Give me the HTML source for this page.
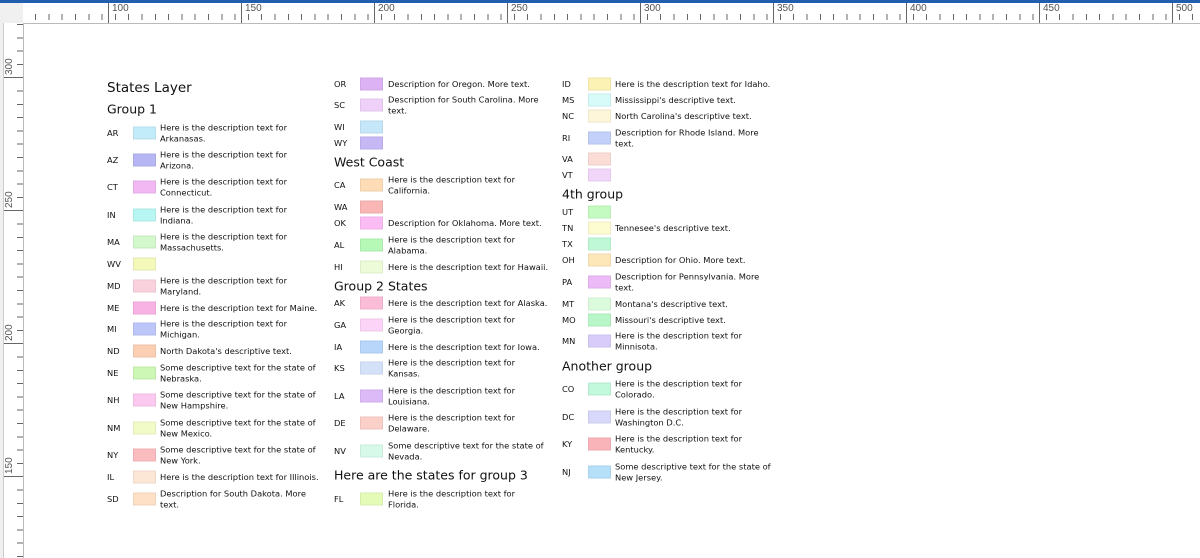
<!DOCTYPE html>
<html><head><meta charset="utf-8"><style>
html,body{margin:0;padding:0}
body{width:1200px;height:558px;position:relative;overflow:hidden;background:#fff;font-family:"DejaVu Sans","Liberation Sans",sans-serif;color:#111}
#blue{position:absolute;left:0;top:0;width:1200px;height:3px;background:#1f5fae}
#corner{position:absolute;left:0;top:3px;width:23px;height:20px;background:#f0f0f0}
#lgray{position:absolute;left:0;top:23px;width:3px;height:535px;background:#f0f0f0}
#top{position:absolute;left:23px;top:3px;width:1177px;height:20px;background:#fff;border-bottom:1px solid #bbb;
background-image:repeating-linear-gradient(90deg,#666 0 1px,transparent 1px 13.3px),repeating-linear-gradient(90deg,#666 0 1px,transparent 1px 133px);
background-size:100% 6px,100% 20px;background-repeat:no-repeat;background-position:-1.2px 11px,85px 0}
#left{position:absolute;left:3px;top:23px;width:19px;height:535px;background:#fff;border-right:1px solid #bbb;border-left:1px solid #ccc;
background-image:repeating-linear-gradient(180deg,#666 0 1px,transparent 1px 13.3px),repeating-linear-gradient(180deg,#666 0 1px,transparent 1px 133px);
background-size:6px 100%,19px 100%;background-repeat:no-repeat;background-position:13px 1px,0 54px}
.tl{position:absolute;top:3px;font-size:10px;color:#555;font-family:"Liberation Sans",sans-serif}
.ll{position:absolute;left:4px;font-size:10px;color:#555;transform:rotate(-90deg);transform-origin:left top;font-family:"Liberation Sans",sans-serif}
#c{position:absolute;left:0;top:1px;width:1200px;height:557px}
.h{position:absolute;font-size:12.5px;white-space:nowrap;transform:translateY(-50%)}
.r{position:absolute;height:0;font-size:8.3px;line-height:10.5px}
.r>*{position:absolute;top:0;transform:translateY(-50%);white-space:nowrap}
.r b{font-weight:normal;left:0}
.r i{left:26px;width:21px;height:11px;border:1px solid rgba(0,0,0,.06)}
.r span{left:53px}
.c2 span{left:54px}
</style></head><body>
<div id="blue"></div><div id="corner"></div><div id="lgray"></div>
<div id="top"></div><div id="left"></div>
<div class="tl" style="left:112px">100</div><div class="tl" style="left:245px">150</div><div class="tl" style="left:378px">200</div><div class="tl" style="left:511px">250</div><div class="tl" style="left:644px">300</div><div class="tl" style="left:777px">350</div><div class="tl" style="left:910px">400</div><div class="tl" style="left:1043px">450</div><div class="tl" style="left:1176px">500</div>
<div class="ll" style="top:75px">300</div><div class="ll" style="top:208px">250</div><div class="ll" style="top:341px">200</div><div class="ll" style="top:474px">150</div>
<div id="c">
<div class="h" style="left:107px;top:87px;font-size:13.5px">States Layer</div>
<div class="h" style="left:107px;top:108px">Group 1</div>
<div class="r" style="left:107px;top:132px"><b>AR</b><i style="background:#c3ecfa"></i><span>Here is the description text for<br>Arkanasas.</span></div>
<div class="r" style="left:107px;top:159px"><b>AZ</b><i style="background:#b6b6f5"></i><span>Here is the description text for<br>Arizona.</span></div>
<div class="r" style="left:107px;top:186px"><b>CT</b><i style="background:#f2b8f3"></i><span>Here is the description text for<br>Connecticut.</span></div>
<div class="r" style="left:107px;top:214px"><b>IN</b><i style="background:#b8f6f4"></i><span>Here is the description text for<br>Indiana.</span></div>
<div class="r" style="left:107px;top:241px"><b>MA</b><i style="background:#d3f8cc"></i><span>Here is the description text for<br>Massachusetts.</span></div>
<div class="r" style="left:107px;top:263px"><b>WV</b><i style="background:#f4f8b8"></i></div>
<div class="r" style="left:107px;top:285px"><b>MD</b><i style="background:#fad2de"></i><span>Here is the description text for<br>Maryland.</span></div>
<div class="r" style="left:107px;top:307px"><b>ME</b><i style="background:#f9b2e4"></i><span>Here is the description text for Maine.</span></div>
<div class="r" style="left:107px;top:328px"><b>MI</b><i style="background:#bcc6f9"></i><span>Here is the description text for<br>Michigan.</span></div>
<div class="r" style="left:107px;top:350px"><b>ND</b><i style="background:#fbcfb4"></i><span>North Dakota's descriptive text.</span></div>
<div class="r" style="left:107px;top:372px"><b>NE</b><i style="background:#cdf7b4"></i><span>Some descriptive text for the state of<br>Nebraska.</span></div>
<div class="r" style="left:107px;top:399px"><b>NH</b><i style="background:#fbc8ef"></i><span>Some descriptive text for the state of<br>New Hampshire.</span></div>
<div class="r" style="left:107px;top:427px"><b>NM</b><i style="background:#f1fbc7"></i><span>Some descriptive text for the state of<br>New Mexico.</span></div>
<div class="r" style="left:107px;top:454px"><b>NY</b><i style="background:#fbbcbf"></i><span>Some descriptive text for the state of<br>New York.</span></div>
<div class="r" style="left:107px;top:476px"><b>IL</b><i style="background:#fce6d6"></i><span>Here is the description text for Illinois.</span></div>
<div class="r" style="left:107px;top:498px"><b>SD</b><i style="background:#fde0c6"></i><span>Description for South Dakota. More<br>text.</span></div>

<div class="r c2" style="left:334px;top:83px"><b>OR</b><i style="background:#dcb2f5"></i><span>Description for Oregon. More text.</span></div>
<div class="r c2" style="left:334px;top:104px"><b>SC</b><i style="background:#efd0f9"></i><span>Description for South Carolina. More<br>text.</span></div>
<div class="r c2" style="left:334px;top:126px"><b>WI</b><i style="background:#c6e6fa"></i></div>
<div class="r c2" style="left:334px;top:142px"><b>WY</b><i style="background:#c6b8f5"></i></div>
<div class="h" style="left:334px;top:161px">West Coast</div>
<div class="r c2" style="left:334px;top:184px"><b>CA</b><i style="background:#fddcb6"></i><span>Here is the description text for<br>California.</span></div>
<div class="r c2" style="left:334px;top:206px"><b>WA</b><i style="background:#fab6b4"></i></div>
<div class="r c2" style="left:334px;top:222px"><b>OK</b><i style="background:#fbbcf4"></i><span>Description for Oklahoma. More text.</span></div>
<div class="r c2" style="left:334px;top:244px"><b>AL</b><i style="background:#b6f8b6"></i><span>Here is the description text for<br>Alabama.</span></div>
<div class="r c2" style="left:334px;top:266px"><b>HI</b><i style="background:#edfbd8"></i><span>Here is the description text for Hawaii.</span></div>
<div class="h" style="left:334px;top:285px">Group 2 States</div>
<div class="r c2" style="left:334px;top:302px"><b>AK</b><i style="background:#fbbcd8"></i><span>Here is the description text for Alaska.</span></div>
<div class="r c2" style="left:334px;top:324px"><b>GA</b><i style="background:#fbd4f8"></i><span>Here is the description text for<br>Georgia.</span></div>
<div class="r c2" style="left:334px;top:346px"><b>IA</b><i style="background:#b8d6fa"></i><span>Here is the description text for Iowa.</span></div>
<div class="r c2" style="left:334px;top:367px"><b>KS</b><i style="background:#d4e2f9"></i><span>Here is the description text for<br>Kansas.</span></div>
<div class="r c2" style="left:334px;top:395px"><b>LA</b><i style="background:#dcbaf7"></i><span>Here is the description text for<br>Louisiana.</span></div>
<div class="r c2" style="left:334px;top:422px"><b>DE</b><i style="background:#fbd0c8"></i><span>Here is the description text for<br>Delaware.</span></div>
<div class="r c2" style="left:334px;top:450px"><b>NV</b><i style="background:#d6f9ea"></i><span>Some descriptive text for the state of<br>Nevada.</span></div>
<div class="h" style="left:334px;top:474px">Here are the states for group 3</div>
<div class="r c2" style="left:334px;top:498px"><b>FL</b><i style="background:#e4fbb8"></i><span>Here is the description text for<br>Florida.</span></div>

<div class="r" style="left:562px;top:83px"><b>ID</b><i style="background:#fbf2b4"></i><span>Here is the description text for Idaho.</span></div>
<div class="r" style="left:562px;top:99px"><b>MS</b><i style="background:#d6fbf9"></i><span>Mississippi's descriptive text.</span></div>
<div class="r" style="left:562px;top:115px"><b>NC</b><i style="background:#fdf6d8"></i><span>North Carolina's descriptive text.</span></div>
<div class="r" style="left:562px;top:137px"><b>RI</b><i style="background:#c2d0fa"></i><span>Description for Rhode Island. More<br>text.</span></div>
<div class="r" style="left:562px;top:158px"><b>VA</b><i style="background:#fbdcd6"></i></div>
<div class="r" style="left:562px;top:174px"><b>VT</b><i style="background:#f1d6fa"></i></div>
<div class="h" style="left:562px;top:193px">4th group</div>
<div class="r" style="left:562px;top:211px"><b>UT</b><i style="background:#c4fbc0"></i></div>
<div class="r" style="left:562px;top:227px"><b>TN</b><i style="background:#fdfbd0"></i><span>Tennesee's descriptive text.</span></div>
<div class="r" style="left:562px;top:243px"><b>TX</b><i style="background:#bef8d6"></i></div>
<div class="r" style="left:562px;top:259px"><b>OH</b><i style="background:#fde6b8"></i><span>Description for Ohio. More text.</span></div>
<div class="r" style="left:562px;top:281px"><b>PA</b><i style="background:#ecbaf6"></i><span>Description for Pennsylvania. More<br>text.</span></div>
<div class="r" style="left:562px;top:303px"><b>MT</b><i style="background:#dcfbdc"></i><span>Montana's descriptive text.</span></div>
<div class="r" style="left:562px;top:319px"><b>MO</b><i style="background:#b8f6c8"></i><span>Missouri's descriptive text.</span></div>
<div class="r" style="left:562px;top:340px"><b>MN</b><i style="background:#d8ccfa"></i><span>Here is the description text for<br>Minnisota.</span></div>
<div class="h" style="left:562px;top:365px">Another group</div>
<div class="r" style="left:562px;top:388px"><b>CO</b><i style="background:#c2f8dc"></i><span>Here is the description text for<br>Colorado.</span></div>
<div class="r" style="left:562px;top:416px"><b>DC</b><i style="background:#d8d8fa"></i><span>Here is the description text for<br>Washington D.C.</span></div>
<div class="r" style="left:562px;top:443px"><b>KY</b><i style="background:#f9b4ba"></i><span>Here is the description text for<br>Kentucky.</span></div>
<div class="r" style="left:562px;top:471px"><b>NJ</b><i style="background:#b6e0fa"></i><span>Some descriptive text for the state of<br>New Jersey.</span></div>
</div>
</body></html>
